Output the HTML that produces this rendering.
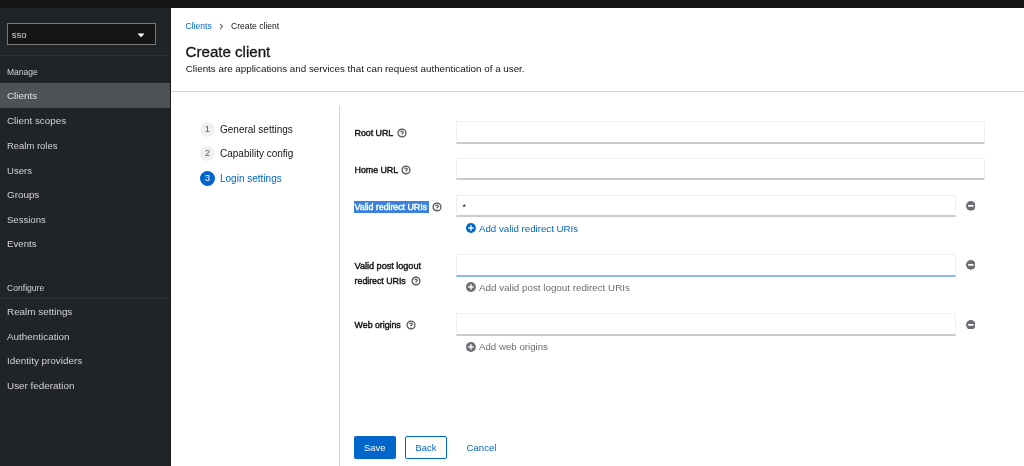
<!DOCTYPE html>
<html><head><meta charset="utf-8"><style>
html,body{margin:0;padding:0;width:1024px;height:466px;overflow:hidden;background:#fff;}
body{position:relative;filter:blur(0.3px);font-family:"Liberation Sans",sans-serif;}
.t{position:absolute;white-space:nowrap;}
.ic{position:absolute;display:block;}
.b{position:absolute;box-sizing:border-box;}
</style></head><body>
<div class="b" style="left:0;top:0;width:1024px;height:8px;background:#151515"></div>
<div class="b" style="left:0;top:8px;width:170px;height:458px;background:#212427"></div>
<div class="b" style="left:170px;top:8px;width:1px;height:458px;background:#1a1a1a"></div>
<div class="b" style="left:6.5px;top:23px;width:149.5px;height:22px;background:#151515;border:1px solid #75787c"></div>
<svg class="ic" style="left:137.3px;top:32.5px" width="8" height="5" viewBox="0 0 8 5"><path d="M0.5 0.5 L7.5 0.5 L4 4.3 Z" fill="#fff"/></svg>
<div class="b" style="left:0;top:55px;width:170px;height:1px;background:#303336"></div>
<div class="b" style="left:0;top:83px;width:170px;height:25px;background:#4f5255"></div>
<div class="b" style="left:0;top:298px;width:170px;height:1px;background:#303336"></div>

<div class="b" style="left:171px;top:91px;width:853px;height:1px;background:#d2d2d2"></div>
<div class="b" style="left:339px;top:106px;width:1px;height:360px;background:#d2d2d2"></div>
<svg class="ic" style="left:219px;top:22.5px" width="5" height="7" viewBox="0 0 5 7"><path d="M1 1 L3.6 3.5 L1 6" fill="none" stroke="#6a6e73" stroke-width="1.1"/></svg>

<div class="b" style="left:200px;top:121.8px;width:15px;height:15px;border-radius:50%;background:#f0f0f0"></div>
<div class="b" style="left:200px;top:146px;width:15px;height:15px;border-radius:50%;background:#f0f0f0"></div>
<div class="b" style="left:200px;top:171px;width:15px;height:15px;border-radius:50%;background:#0066cc"></div>
<div class="t" style="left:200px;top:121.8px;width:15px;text-align:center;font-size:9.6px;line-height:13.4px;color:#5a5e63">1</div>
<div class="t" style="left:200px;top:146px;width:15px;text-align:center;font-size:9.6px;line-height:13.4px;color:#5a5e63">2</div>
<div class="t" style="left:200px;top:171px;width:15px;text-align:center;font-size:9.6px;line-height:13.4px;color:#fff">3</div>

<div class="b" style="left:456px;top:121px;width:529px;height:23px;border:1px solid #f0f0f0;border-bottom:2px solid #cbcccd"></div>
<div class="b" style="left:456px;top:158px;width:529px;height:22px;border:1px solid #f0f0f0;border-bottom:2px solid #cbcccd"></div>
<div class="b" style="left:456px;top:195px;width:500px;height:22px;border:1px solid #f0f0f0;border-bottom:2px solid #cbcccd"></div>
<div class="b" style="left:456px;top:254px;width:500px;height:23px;border:1px solid #f0f0f0;border-bottom:2px solid #8ab9e8"></div>
<div class="b" style="left:456px;top:313px;width:500px;height:23px;border:1px solid #f0f0f0;border-bottom:2px solid #cbcccd"></div>
<div class="t" style="left:462.5px;top:203px;font-size:9px;line-height:9px;color:#151515">*</div>

<div class="b" style="left:354px;top:201px;width:75px;height:12px;background:#3a80de"></div>

<div class="b" style="left:354px;top:436.3px;width:41.5px;height:22.3px;border-radius:2px;background:#0066cc"></div>
<div class="b" style="left:405.2px;top:436.3px;width:41.7px;height:22.3px;border-radius:2px;border:1px solid #0066cc"></div>
<svg class="ic" style="left:397.2px;top:128.0px" width="10" height="10" viewBox="0 0 10 10"><circle cx="5" cy="5" r="3.95" fill="none" stroke="#4f5256" stroke-width="1.25"/><path d="M3.7 4.2 Q3.7 3.0 5 3.0 Q6.3 3.0 6.3 4.1 Q6.3 4.8 5.5 5.1 Q5 5.3 5 6.0" fill="none" stroke="#4f5256" stroke-width="1.15"/><circle cx="5" cy="7.0" r="0.6" fill="#4f5256"/></svg>
<svg class="ic" style="left:401.4px;top:164.6px" width="10" height="10" viewBox="0 0 10 10"><circle cx="5" cy="5" r="3.95" fill="none" stroke="#4f5256" stroke-width="1.25"/><path d="M3.7 4.2 Q3.7 3.0 5 3.0 Q6.3 3.0 6.3 4.1 Q6.3 4.8 5.5 5.1 Q5 5.3 5 6.0" fill="none" stroke="#4f5256" stroke-width="1.15"/><circle cx="5" cy="7.0" r="0.6" fill="#4f5256"/></svg>
<svg class="ic" style="left:432.4px;top:201.5px" width="10" height="10" viewBox="0 0 10 10"><circle cx="5" cy="5" r="3.95" fill="none" stroke="#4f5256" stroke-width="1.25"/><path d="M3.7 4.2 Q3.7 3.0 5 3.0 Q6.3 3.0 6.3 4.1 Q6.3 4.8 5.5 5.1 Q5 5.3 5 6.0" fill="none" stroke="#4f5256" stroke-width="1.15"/><circle cx="5" cy="7.0" r="0.6" fill="#4f5256"/></svg>
<svg class="ic" style="left:410.9px;top:276.0px" width="10" height="10" viewBox="0 0 10 10"><circle cx="5" cy="5" r="3.95" fill="none" stroke="#4f5256" stroke-width="1.25"/><path d="M3.7 4.2 Q3.7 3.0 5 3.0 Q6.3 3.0 6.3 4.1 Q6.3 4.8 5.5 5.1 Q5 5.3 5 6.0" fill="none" stroke="#4f5256" stroke-width="1.15"/><circle cx="5" cy="7.0" r="0.6" fill="#4f5256"/></svg>
<svg class="ic" style="left:405.5px;top:320.0px" width="10" height="10" viewBox="0 0 10 10"><circle cx="5" cy="5" r="3.95" fill="none" stroke="#4f5256" stroke-width="1.25"/><path d="M3.7 4.2 Q3.7 3.0 5 3.0 Q6.3 3.0 6.3 4.1 Q6.3 4.8 5.5 5.1 Q5 5.3 5 6.0" fill="none" stroke="#4f5256" stroke-width="1.15"/><circle cx="5" cy="7.0" r="0.6" fill="#4f5256"/></svg>
<svg class="ic" style="left:466.35px;top:223.45000000000002px" width="9.9" height="9.9" viewBox="0 0 10 10"><circle cx="5" cy="5" r="5" fill="#0066cc"/><rect x="2.2" y="4.3" width="5.6" height="1.4" fill="#fff"/><rect x="4.3" y="2.2" width="1.4" height="5.6" fill="#fff"/></svg>
<svg class="ic" style="left:466.45px;top:282.45px" width="9.9" height="9.9" viewBox="0 0 10 10"><circle cx="5" cy="5" r="5" fill="#6a6e73"/><rect x="2.2" y="4.3" width="5.6" height="1.4" fill="#fff"/><rect x="4.3" y="2.2" width="1.4" height="5.6" fill="#fff"/></svg>
<svg class="ic" style="left:466.45px;top:341.65000000000003px" width="9.9" height="9.9" viewBox="0 0 10 10"><circle cx="5" cy="5" r="5" fill="#6a6e73"/><rect x="2.2" y="4.3" width="5.6" height="1.4" fill="#fff"/><rect x="4.3" y="2.2" width="1.4" height="5.6" fill="#fff"/></svg>
<svg class="ic" style="left:965.65px;top:201.15px" width="9.7" height="9.7" viewBox="0 0 10 10"><circle cx="5" cy="5" r="5" fill="#6a6e73"/><rect x="2.2" y="4.1" width="5.6" height="1.8" fill="#fff"/></svg>
<svg class="ic" style="left:965.65px;top:260.45px" width="9.7" height="9.7" viewBox="0 0 10 10"><circle cx="5" cy="5" r="5" fill="#6a6e73"/><rect x="2.2" y="4.1" width="5.6" height="1.8" fill="#fff"/></svg>
<svg class="ic" style="left:965.65px;top:319.65px" width="9.7" height="9.7" viewBox="0 0 10 10"><circle cx="5" cy="5" r="5" fill="#6a6e73"/><rect x="2.2" y="4.1" width="5.6" height="1.8" fill="#fff"/></svg>

<div class="t" style="left:7px;top:68.00px;font-size:8.5px;line-height:8.5px;color:#d2d2d2;font-weight:normal;letter-spacing:0px;">Manage</div>
<div class="t" style="left:7px;top:91.26px;font-size:9.85px;line-height:9.85px;color:#e0e0e0;font-weight:normal;letter-spacing:0px;">Clients</div>
<div class="t" style="left:7px;top:116.06px;font-size:9.85px;line-height:9.85px;color:#d2d2d2;font-weight:normal;letter-spacing:0px;">Client scopes</div>
<div class="t" style="left:7px;top:141.10px;font-size:9.45px;line-height:9.45px;color:#d2d2d2;font-weight:normal;letter-spacing:0px;">Realm roles</div>
<div class="t" style="left:7px;top:165.62px;font-size:9.55px;line-height:9.55px;color:#d2d2d2;font-weight:normal;letter-spacing:0px;">Users</div>
<div class="t" style="left:7px;top:190.06px;font-size:9.85px;line-height:9.85px;color:#d2d2d2;font-weight:normal;letter-spacing:0px;">Groups</div>
<div class="t" style="left:7px;top:215.02px;font-size:9.55px;line-height:9.55px;color:#d2d2d2;font-weight:normal;letter-spacing:0px;">Sessions</div>
<div class="t" style="left:7px;top:239.49px;font-size:9.7px;line-height:9.7px;color:#d2d2d2;font-weight:normal;letter-spacing:0px;">Events</div>
<div class="t" style="left:7px;top:283.52px;font-size:8.6px;line-height:8.6px;color:#d2d2d2;font-weight:normal;letter-spacing:0px;">Configure</div>
<div class="t" style="left:7px;top:306.82px;font-size:9.9px;line-height:9.9px;color:#d2d2d2;font-weight:normal;letter-spacing:0px;">Realm settings</div>
<div class="t" style="left:7px;top:331.72px;font-size:9.9px;line-height:9.9px;color:#d2d2d2;font-weight:normal;letter-spacing:0px;">Authentication</div>
<div class="t" style="left:7px;top:356.32px;font-size:9.9px;line-height:9.9px;color:#d2d2d2;font-weight:normal;letter-spacing:0px;">Identity providers</div>
<div class="t" style="left:7px;top:381.02px;font-size:9.9px;line-height:9.9px;color:#d2d2d2;font-weight:normal;letter-spacing:0px;">User federation</div>
<div class="t" style="left:11.7px;top:29.97px;font-size:9.6px;line-height:9.6px;color:#d2d2d2;font-weight:normal;letter-spacing:0px;">sso</div>
<div class="t" style="left:185.5px;top:21.92px;font-size:8.6px;line-height:8.6px;color:#0066cc;font-weight:normal;letter-spacing:0px;">Clients</div>
<div class="t" style="left:231px;top:21.92px;font-size:8.6px;line-height:8.6px;color:#151515;font-weight:normal;letter-spacing:0px;">Create client</div>
<div class="t" style="left:185.6px;top:44.03px;font-size:15.2px;line-height:15.2px;color:#151515;font-weight:normal;letter-spacing:-0.05px;-webkit-text-stroke:0.3px currentColor;">Create client</div>
<div class="t" style="left:185.8px;top:64.40px;font-size:9.8px;line-height:9.8px;color:#151515;font-weight:normal;letter-spacing:0px;">Clients are applications and services that can request authentication of a user.</div>
<div class="t" style="left:220px;top:124.84px;font-size:10px;line-height:10px;color:#151515;font-weight:normal;letter-spacing:0px;">General settings</div>
<div class="t" style="left:220px;top:149.44px;font-size:10px;line-height:10px;color:#151515;font-weight:normal;letter-spacing:0px;">Capability config</div>
<div class="t" style="left:220px;top:174.13px;font-size:10px;line-height:10px;color:#0066cc;font-weight:normal;letter-spacing:0px;">Login settings</div>
<div class="t" style="left:354.6px;top:129.17px;font-size:8.9px;line-height:8.9px;color:#151515;font-weight:normal;letter-spacing:-0.05px;-webkit-text-stroke:0.42px currentColor;">Root URL</div>
<div class="t" style="left:354.6px;top:165.97px;font-size:8.9px;line-height:8.9px;color:#151515;font-weight:normal;letter-spacing:-0.05px;-webkit-text-stroke:0.42px currentColor;">Home URL</div>
<div class="t" style="left:354.6px;top:202.67px;font-size:8.9px;line-height:8.9px;color:#ffffff;font-weight:normal;letter-spacing:-0.05px;-webkit-text-stroke:0.42px currentColor;">Valid redirect URIs</div>
<div class="t" style="left:354.6px;top:262.21px;font-size:9.2px;line-height:9.2px;color:#151515;font-weight:normal;letter-spacing:-0.05px;-webkit-text-stroke:0.42px currentColor;">Valid post logout</div>
<div class="t" style="left:354.6px;top:276.97px;font-size:8.9px;line-height:8.9px;color:#151515;font-weight:normal;letter-spacing:-0.05px;-webkit-text-stroke:0.42px currentColor;">redirect URIs</div>
<div class="t" style="left:354.6px;top:320.97px;font-size:8.9px;line-height:8.9px;color:#151515;font-weight:normal;letter-spacing:-0.05px;-webkit-text-stroke:0.42px currentColor;">Web origins</div>
<div class="t" style="left:479px;top:223.99px;font-size:9.7px;line-height:9.7px;color:#0066cc;font-weight:normal;letter-spacing:0px;">Add valid redirect URIs</div>
<div class="t" style="left:479px;top:283.20px;font-size:9.8px;line-height:9.8px;color:#6a6e73;font-weight:normal;letter-spacing:0px;">Add valid post logout redirect URIs</div>
<div class="t" style="left:479px;top:342.49px;font-size:9.7px;line-height:9.7px;color:#6a6e73;font-weight:normal;letter-spacing:0px;">Add web origins</div>
<div class="t" style="left:364px;top:443.24px;font-size:9.4px;line-height:9.4px;color:#ffffff;font-weight:normal;letter-spacing:0px;">Save</div>
<div class="t" style="left:415.6px;top:443.24px;font-size:9.4px;line-height:9.4px;color:#0066cc;font-weight:normal;letter-spacing:0px;">Back</div>
<div class="t" style="left:466.6px;top:443.07px;font-size:9.6px;line-height:9.6px;color:#0066cc;font-weight:normal;letter-spacing:0px;">Cancel</div>

</body></html>
